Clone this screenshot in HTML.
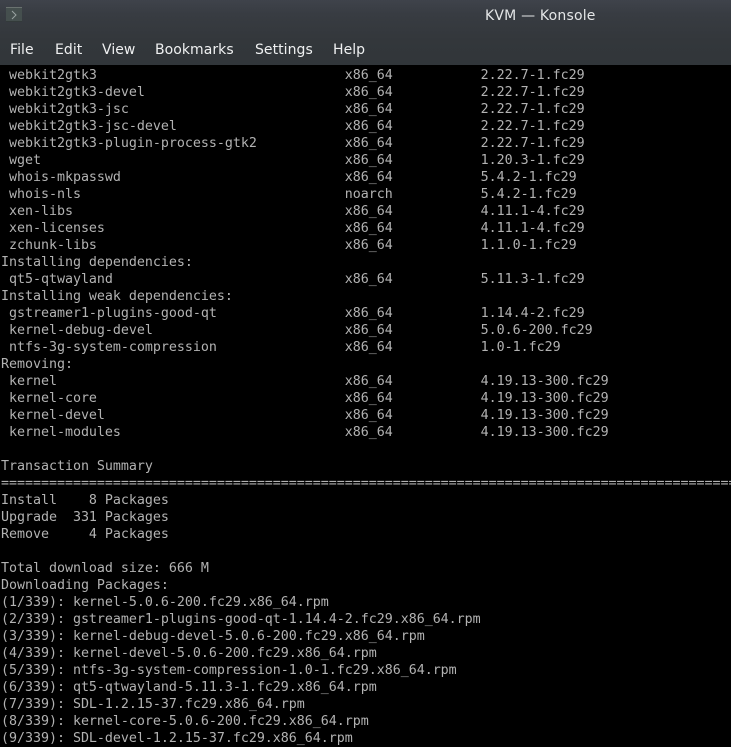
<!DOCTYPE html>
<html>
<head>
<meta charset="utf-8">
<title>KVM — Konsole</title>
<style>
html,body{margin:0;padding:0;background:#000}
#w{position:relative;width:731px;height:747px;overflow:hidden;background:#000}
#head{position:absolute;left:0;top:0;width:731px;height:65px;background:linear-gradient(#3f434b 0,#383c42 14px,#33373b 40px,#31363a 65px)}
#icon{position:absolute;left:6px;top:7px;width:16px;height:15px;background:#454f4e;border-top:1px solid #6a7270;border-bottom:1px solid #333a3a;box-sizing:border-box}
#title{position:absolute;left:485px;top:6px;font:14px/20px "DejaVu Sans",sans-serif;color:#e4e6e7;letter-spacing:.2px;white-space:pre}
.m{position:absolute;top:40px;font:14px/20px "DejaVu Sans",sans-serif;color:#eff0f1;white-space:pre;letter-spacing:.05px}
#t{position:absolute;left:1px;top:67px;margin:0;font:13.33px/17px "DejaVu Sans Mono",monospace;letter-spacing:-.03px;color:#b2b2b2;white-space:pre;width:730px;overflow:hidden}
</style>
</head>
<body>
<div id="w">
<div id="head">
<div id="icon"><svg width="16" height="13" style="position:absolute;left:0;top:0"><path d="M6 3l4 4-4 4" fill="none" stroke="#9aa3a2" stroke-width="1"/></svg></div>
<div id="title">KVM — Konsole</div>
<div class="m" style="left:10px">File</div>
<div class="m" style="left:55px">Edit</div>
<div class="m" style="left:102px">View</div>
<div class="m" style="left:155px">Bookmarks</div>
<div class="m" style="left:255px">Settings</div>
<div class="m" style="left:333px">Help</div>
</div>
<pre id="t"> webkit2gtk3                               x86_64           2.22.7-1.fc29
 webkit2gtk3-devel                         x86_64           2.22.7-1.fc29
 webkit2gtk3-jsc                           x86_64           2.22.7-1.fc29
 webkit2gtk3-jsc-devel                     x86_64           2.22.7-1.fc29
 webkit2gtk3-plugin-process-gtk2           x86_64           2.22.7-1.fc29
 wget                                      x86_64           1.20.3-1.fc29
 whois-mkpasswd                            x86_64           5.4.2-1.fc29
 whois-nls                                 noarch           5.4.2-1.fc29
 xen-libs                                  x86_64           4.11.1-4.fc29
 xen-licenses                              x86_64           4.11.1-4.fc29
 zchunk-libs                               x86_64           1.1.0-1.fc29
Installing dependencies:
 qt5-qtwayland                             x86_64           5.11.3-1.fc29
Installing weak dependencies:
 gstreamer1-plugins-good-qt                x86_64           1.14.4-2.fc29
 kernel-debug-devel                        x86_64           5.0.6-200.fc29
 ntfs-3g-system-compression                x86_64           1.0-1.fc29
Removing:
 kernel                                    x86_64           4.19.13-300.fc29
 kernel-core                               x86_64           4.19.13-300.fc29
 kernel-devel                              x86_64           4.19.13-300.fc29
 kernel-modules                            x86_64           4.19.13-300.fc29

Transaction Summary
================================================================================================
Install    8 Packages
Upgrade  331 Packages
Remove     4 Packages

Total download size: 666 M
Downloading Packages:
(1/339): kernel-5.0.6-200.fc29.x86_64.rpm
(2/339): gstreamer1-plugins-good-qt-1.14.4-2.fc29.x86_64.rpm
(3/339): kernel-debug-devel-5.0.6-200.fc29.x86_64.rpm
(4/339): kernel-devel-5.0.6-200.fc29.x86_64.rpm
(5/339): ntfs-3g-system-compression-1.0-1.fc29.x86_64.rpm
(6/339): qt5-qtwayland-5.11.3-1.fc29.x86_64.rpm
(7/339): SDL-1.2.15-37.fc29.x86_64.rpm
(8/339): kernel-core-5.0.6-200.fc29.x86_64.rpm
(9/339): SDL-devel-1.2.15-37.fc29.x86_64.rpm</pre>
</div>
</body>
</html>
